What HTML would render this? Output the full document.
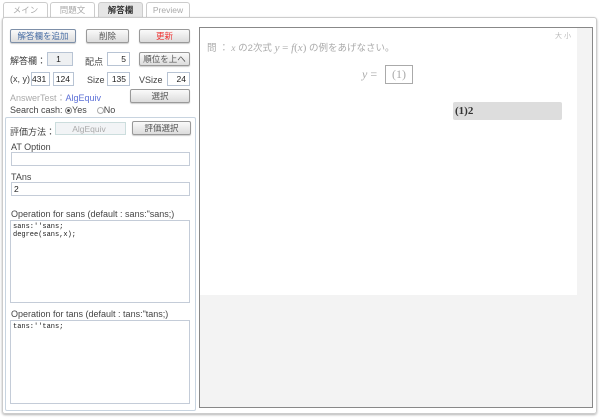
<!DOCTYPE html>
<html><head><meta charset="utf-8"><style>
*{box-sizing:border-box;margin:0;padding:0}
body{width:600px;height:420px;background:#fff;font-family:"Liberation Sans","Noto Sans CJK JP",sans-serif;font-size:9px;color:#444;position:relative;overflow:hidden}
.a{position:absolute}
.tab{position:absolute;top:2px;height:16px;border:1px solid #ccc;border-bottom:none;border-radius:3px 3px 0 0;background:#fff;color:#aaa;text-align:center;line-height:15px;font-size:8.5px}
.btn{position:absolute;border:1px solid #999;border-radius:2px;background:linear-gradient(#fafafa,#dcdcdc);text-align:center;font-size:8.5px;color:#555;box-shadow:0 1px 1px rgba(0,0,0,.2)}
.in{position:absolute;border:1px solid #b8c4d4;background:#fff;text-align:right;padding-right:3px;font-size:8.5px;line-height:12px;color:#222}
.lbl{position:absolute;font-size:9px;color:#444}
.ta{position:absolute;border:1px solid #c4ccd8;background:#fff;font-family:"Liberation Mono",monospace;font-size:7px;line-height:8px;padding:2px;color:#222;white-space:pre}
</style></head><body>
<div class="tab" style="left:3px;width:45px">メイン</div>
<div class="tab" style="left:50px;width:45px">問題文</div>
<div class="tab" style="left:98px;width:45px;background:#e6e6e6;color:#333;font-weight:bold">解答欄</div>
<div class="tab" style="left:146px;width:44px">Preview</div>
<div class="a" style="left:2px;top:17px;width:595px;height:397px;border:1px solid #ccc;border-radius:3px;box-shadow:0 1px 2px rgba(0,0,0,.3)"></div>

<div class="btn" style="left:10px;top:29px;width:66px;height:14px;line-height:12px;color:#4a6fa5;border-color:#7d8fa8">解答欄を追加</div>
<div class="btn" style="left:86px;top:29px;width:43px;height:14px;line-height:12px">削除</div>
<div class="btn" style="left:139px;top:29px;width:51px;height:14px;line-height:12px;color:#e33">更新</div>

<div class="lbl" style="left:10px;top:54px">解答欄：</div>
<div class="in" style="left:47px;top:52px;width:26px;height:14px;background:#eef0f2;text-align:center">1</div>
<div class="lbl" style="left:85px;top:55px">配点</div>
<div class="in" style="left:107px;top:52px;width:23px;height:14px">5</div>
<div class="btn" style="left:139px;top:52px;width:51px;height:14px;line-height:12px">順位を上へ</div>

<div class="lbl" style="left:10px;top:74px">(x, y)</div>
<div class="in" style="left:31px;top:72px;width:19px;height:14px">431</div>
<div class="in" style="left:53px;top:72px;width:21px;height:14px">124</div>
<div class="lbl" style="left:87px;top:75px">Size</div>
<div class="in" style="left:107px;top:72px;width:23px;height:14px">135</div>
<div class="lbl" style="left:139px;top:75px">VSize</div>
<div class="in" style="left:167px;top:72px;width:23px;height:14px">24</div>

<div class="lbl" style="left:10px;top:91px;color:#aaa">AnswerTest：<span style="color:#5b6fd6">AlgEquiv</span></div>
<div class="btn" style="left:130px;top:89px;width:60px;height:14px;line-height:12px">選択</div>
<div class="lbl" style="left:10px;top:105px">Search cash: <span style="display:inline-block;width:7px;height:7px;border:1px solid #888;border-radius:50%;background:radial-gradient(#444 35%,#fff 45%);vertical-align:-1px"></span>Yes &nbsp;&nbsp; <span style="display:inline-block;width:7px;height:7px;border:1px solid #aaa;border-radius:50%;vertical-align:-1px"></span>No</div>

<div class="a" style="left:5px;top:117px;width:191px;height:294px;border:1px solid #c8d4e0;border-radius:2px"></div>
<div class="lbl" style="left:10px;top:125px">評価方法：</div>
<div class="in" style="left:55px;top:122px;width:71px;height:13px;background:#f2f4f6;border-color:#cdd;text-align:center;color:#aaa">AlgEquiv</div>
<div class="btn" style="left:132px;top:121px;width:59px;height:14px;line-height:12px">評価選択</div>

<div class="lbl" style="left:11px;top:142px">AT Option</div>
<div class="in" style="left:11px;top:152px;width:179px;height:14px;border-color:#c4ccd8"></div>
<div class="lbl" style="left:11px;top:172px">TAns</div>
<div class="in" style="left:11px;top:182px;width:179px;height:14px;text-align:left;padding-left:2px;border-color:#c4ccd8">2</div>
<div class="lbl" style="left:11px;top:209px">Operation for sans (default : sans:"sans;)</div>
<div class="ta" style="left:10px;top:220px;width:180px;height:83px">sans:''sans;
degree(sans,x);</div>
<div class="lbl" style="left:11px;top:309px">Operation for tans (default : tans:"tans;)</div>
<div class="ta" style="left:10px;top:320px;width:180px;height:84px">tans:''tans;</div>

<div class="a" style="left:199px;top:27px;width:394px;height:381px;border:1px solid #888;background:#f3f3f3"></div>
<div class="a" style="left:200px;top:28px;width:377px;height:267px;background:#fff"></div>
<div class="a" style="left:555px;top:31px;font-size:7px;color:#bbb">大 小</div>
<div class="a" style="left:207px;top:40px;font-size:9.5px;color:#aaa">問 ： <i style="font-family:'Liberation Serif',serif">x</i> の2次式 <i style="font-family:'Liberation Serif',serif;font-size:11px">y</i> <span style="font-family:'Liberation Serif',serif;font-size:11px">= <i>f</i>(<i>x</i>)</span> の例をあげなさい。</div>
<div class="a" style="left:362px;top:67px;font-family:'Liberation Serif',serif;font-size:12px;color:#aaa"><i>y</i> =</div>
<div class="a" style="left:385px;top:65px;width:28px;height:19px;border:1px solid #aaa;font-family:'Liberation Serif',serif;font-size:12px;color:#aaa;text-align:center;line-height:17px">(1)</div>
<div class="a" style="left:453px;top:102px;width:109px;height:18px;background:#ddd;border-radius:2px;font-family:'Liberation Serif',serif;font-size:11px;font-weight:bold;color:#333;line-height:18px;padding-left:2px">(1)2</div>
</body></html>
